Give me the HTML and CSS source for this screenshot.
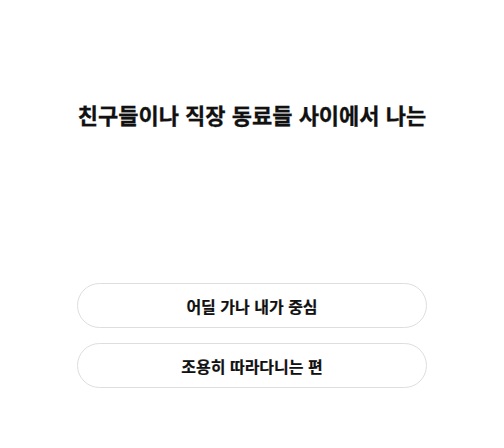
FILE: index.html
```html
<!DOCTYPE html>
<html lang="ko">
<head>
<meta charset="utf-8">
<link rel="stylesheet" href="styles.css">
</head>
<body>
<main class="quiz">
  <h1 class="question">친구들이나 직장 동료들 사이에서 나는</h1>
  <div class="options">
    <button class="option">어딜 가나 내가 중심</button>
    <button class="option">조용히 따라다니는 편</button>
  </div>
</main>
</body>
</html>
```
FILE: styles.css
```css
html, body {
  margin: 0;
  padding: 0;
  background: #fff;
}

body {
  font-family: "Noto Sans CJK KR", "Noto Sans", sans-serif;
  color: #111;
}

.quiz {
  width: 350px;
  margin: 0 auto;
  padding-top: 96px;
  display: flex;
  flex-direction: column;
}

.question {
  margin: 0;
  font-size: 22px;
  font-weight: 700;
  line-height: 36px;
  text-align: center;
  white-space: nowrap;
  -webkit-text-stroke: 0.3px #111;
}

.options {
  margin-top: 151px;
  display: flex;
  flex-direction: column;
  gap: 15px;
}

.option {
  height: 45px;
  border: 1px solid #dedede;
  border-radius: 23px;
  background: #fff;
  font-family: inherit;
  font-size: 16px;
  font-weight: 700;
  color: #111;
  padding: 0;
  -webkit-text-stroke: 0.2px #111;
}
```
